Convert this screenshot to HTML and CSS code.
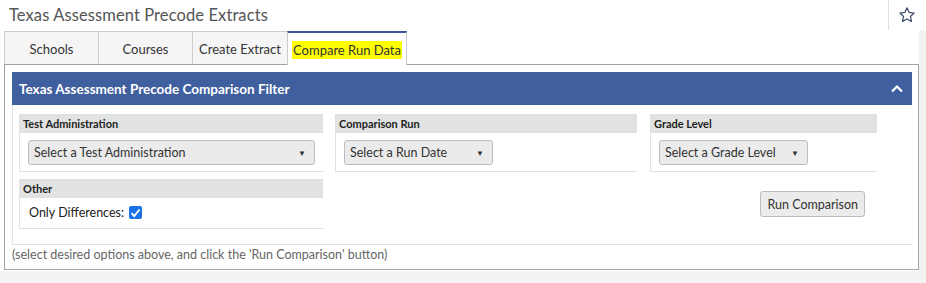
FILE: index.html
```html
<!DOCTYPE html>
<html lang="en">
<head>
    <meta charset="UTF-8">
    <meta name="viewport" content="width=device-width, initial-scale=1.0">
    <title>Texas Assessment Precode Extracts</title>
    <link rel="stylesheet" href="styles.css">
</head>
<body>
    <header class="page-header">
        <h1>Texas Assessment Precode Extracts</h1>
        <div class="fav">
            <svg width="18" height="18" viewBox="0 0 24 24">
                <path d="M12 2.5l2.9 6.1 6.6.8-4.9 4.6 1.3 6.6L12 17.3l-5.9 3.3 1.3-6.6-4.9-4.6 6.6-.8z" fill="none" stroke="#3b4a66" stroke-width="1.6" stroke-linejoin="round"/>
            </svg>
        </div>
    </header>

    <div class="main">
        <!-- Tabs -->
        <nav class="tabs">
            <a href="#" class="tab">Schools</a>
            <a href="#" class="tab">Courses</a>
            <a href="#" class="tab tab-extract">Create Extract</a>
            <a href="#" class="tab active"><span class="hl">Compare Run Data</span></a>
        </nav>

        <div class="panel">
            <div class="filter-head">
                <span>Texas Assessment Precode Comparison Filter</span>
                <svg width="14" height="10" viewBox="0 0 14 10">
                    <path d="M2 7.5l5-5 5 5" fill="none" stroke="#fff" stroke-width="2.2"/>
                </svg>
            </div>

            <div class="filter-body">
                <div class="field f1">
                    <div class="field-label">Test Administration</div>
                    <div class="field-input">
                        <button class="select wide"><span>Select a Test Administration</span><i>&#9660;</i></button>
                    </div>
                </div>
                <div class="field f2">
                    <div class="field-label">Comparison Run</div>
                    <div class="field-input">
                        <button class="select"><span>Select a Run Date</span><i>&#9660;</i></button>
                    </div>
                </div>
                <div class="field f3">
                    <div class="field-label">Grade Level</div>
                    <div class="field-input">
                        <button class="select"><span>Select a Grade Level</span><i>&#9660;</i></button>
                    </div>
                </div>

                <div class="field f1 other">
                    <div class="field-label">Other</div>
                    <div class="field-input check-row">
                        <label>Only Differences:</label>
                        <span class="checkbox">
                            <svg width="11" height="10" viewBox="0 0 11 10">
                                <path d="M1.5 5.2l2.8 2.8 5.2-6.5" fill="none" stroke="#fff" stroke-width="2"/>
                            </svg>
                        </span>
                    </div>
                </div>
                <div class="run-cell">
                    <button class="btn">Run Comparison</button>
                </div>
            </div>

            <p class="hint">(select desired options above, and click the 'Run Comparison' button)</p>
        </div>
    </div>
</body>
</html>
```

FILE: styles.css
```css
body {
    margin: 0;
    font-family: Lato, "Open Sans", Arial, sans-serif;
    background-color: #f3f3f3;
    color: #333;
}
.page-header {
    background: #fff;
    height: 30px;
    display: flex;
    align-items: center;
    justify-content: space-between;
}
.page-header h1 {
    margin: 0 0 0 9px;
    font-size: 16.5px;
    font-weight: normal;
    color: #555;
    letter-spacing: 0.1px;
}
.fav {
    width: 36px;
    height: 30px;
    border-left: 1px solid #ddd;
    display: flex;
    align-items: center;
    justify-content: center;
    margin-right: 1px;
}
.main {
    width: 915px;
    background: #fff;
    padding: 1px 0 1px 4px;
}
.tabs {
    display: flex;
}
.tab {
    width: 94px;
    height: 33px;
    box-sizing: border-box;
    display: flex;
    align-items: center;
    justify-content: center;
    padding-top: 1px;
    background: #f5f5f5;
    border: 1px solid #ccc;
    border-right: none;
    border-bottom: none;
    color: #333;
    font-size: 13px;
    text-decoration: none;
}
.tab-extract {
    width: 95px;
}
.tab.active {
    width: 120px;
    height: 34px;
    background: #fff;
    border-top: 2px solid #3b579a;
    border-right: 1px solid #ccc;
    margin-bottom: -1px;
    position: relative;
    z-index: 1;
}
.hl {
    background: #ffff00;
    padding: 1px 1px;
}
.panel {
    border: 1px solid #a3a3a3;
    padding: 7px 6px 0 7px;
}
.filter-head {
    height: 33px;
    background: #3f5f9f;
    color: #fff;
    display: flex;
    align-items: center;
    justify-content: space-between;
    padding: 0 8px 0 7px;
    font-size: 13.5px;
    font-weight: bold;
}
.filter-body {
    border-left: 1px solid #e2e2e2;
    border-bottom: 1px solid #e2e2e2;
    padding: 9px 0 15px 6px;
    display: grid;
    grid-template-columns: 304px 302px 228px;
    column-gap: 12px;
    row-gap: 7px;
}
.f3 {
    margin-left: 1px;
}
.field {
    border-left: 1px solid #e2e2e2;
    border-bottom: 1px solid #e2e2e2;
}
.field-label {
    background: #e1e2e2;
    height: 19px;
    line-height: 19px;
    padding-left: 4px;
    font-size: 11px;
    font-weight: bold;
    color: #222;
    margin-left: -1px;
}
.field-input {
    padding: 7px 8px 6px 8px;
}
.select {
    display: inline-flex;
    align-items: center;
    justify-content: space-between;
    width: 149px;
    height: 25px;
    padding: 0 8px 0 5px;
    background: #ebebeb;
    border: 1px solid #bcbcbc;
    border-radius: 3px;
    font-family: inherit;
    font-size: 12.5px;
    color: #333;
}
.select.wide {
    width: 287px;
}
.select i {
    font-style: normal;
    font-size: 8px;
    color: #333;
}
.other .field-input {
    padding: 7px 9px 8px 9px;
}
.check-row {
    display: flex;
    align-items: center;
    gap: 5px;
    font-size: 12.5px;
    color: #222;
}
.checkbox {
    width: 13px;
    height: 13px;
    border-radius: 2px;
    background: #1a73e8;
    display: flex;
    align-items: center;
    justify-content: center;
}
.run-cell {
    grid-column: 3;
    display: flex;
    align-items: center;
    justify-content: flex-end;
    padding-right: 12px;
}
.btn {
    height: 26px;
    padding: 0 6px;
    background: #ebebeb;
    border: 1px solid #bcbcbc;
    border-radius: 3px;
    font-family: inherit;
    font-size: 12.5px;
    color: #333;
}
.hint {
    margin: 0;
    padding: 2px 0 7px 0;
    line-height: 15px;
    font-size: 12.5px;
    color: #666;
}
```
